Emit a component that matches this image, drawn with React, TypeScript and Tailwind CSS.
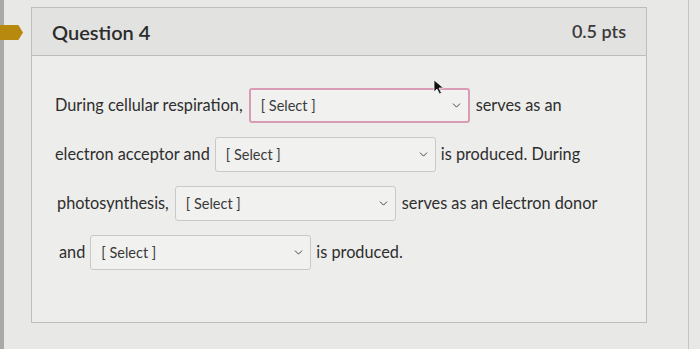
import React from 'react';
import { ChevronDown } from 'lucide-react';

function Select({ focused = false }: { focused?: boolean }) {
  return (
    <div
      className={
        'flex h-[35px] w-[221px] shrink-0 items-center justify-between rounded-[3px] bg-[#f1f1ef] pl-[10px] pr-[5px] ' +
        (focused ? 'border-2 border-[#d99bb6]' : 'border border-[#c9c9c7]')
      }
    >
      <span className="text-[14.5px] text-[#3a3a3a]">[ Select ]</span>
      <ChevronDown size={13} strokeWidth={1.8} className="text-[#444]" />
    </div>
  );
}

export default function App() {
  return (
    <div className="relative flex h-[349px] w-[700px] overflow-hidden bg-[#e8e8e6] font-['Lato',_'Liberation_Sans',_sans-serif] text-[#2e2e2e]">
      {/* left edge of the page */}
      <div className="w-[4px] shrink-0 bg-[#a9a9a7]" />

      <div className="relative w-[685px] shrink-0 border-r border-[#c4c4c2] pl-[27px] pt-[7px]">
        {/* question marker */}
        <div className="absolute left-[-4px] top-[25px] h-[15px] w-[23px] bg-[#b8890f] [clip-path:polygon(0_0,80%_0,100%_50%,80%_100%,0_100%)]" />

        <div className="h-[316px] w-[616px] border border-[#bdbdbb] bg-[#ededeb]">
          <div className="flex h-[48px] items-center justify-between border-b border-[#bdbdbb] bg-[#e2e2e0] pl-[20px] pr-[20px]">
            <h2 className="text-[20px] font-semibold text-[#2b2b2b]">Question 4</h2>
            <span className="text-[18px] font-semibold text-[#3a3a3a]">0.5 pts</span>
          </div>

          <div className="flex flex-col gap-[14px] pl-[23px] pt-[32px] text-[16.3px]">
            <div className="flex items-center gap-[6px]">
              <span>During cellular respiration,</span>
              <Select focused />
              <span>serves as an</span>
            </div>
            <div className="flex items-center gap-[5px]">
              <span>electron acceptor and</span>
              <Select />
              <span>is produced. During</span>
            </div>
            <div className="flex items-center gap-[6px] pl-[2px]">
              <span>photosynthesis,</span>
              <Select />
              <span>serves as an electron donor</span>
            </div>
            <div className="flex items-center gap-[5px] pl-[4px]">
              <span>and</span>
              <Select />
              <span>is produced.</span>
            </div>
          </div>
        </div>

        {/* mouse pointer */}
        <svg className="absolute left-[429px] top-[79px]" width="12" height="16" viewBox="0 0 12 16">
          <path d="M1 1 L1 13 L4 10 L6.5 15 L8.5 14 L6 9 L10.5 9 Z" fill="#111" stroke="#f5f5f5" strokeWidth="0.8" />
        </svg>
      </div>
    </div>
  );
}
